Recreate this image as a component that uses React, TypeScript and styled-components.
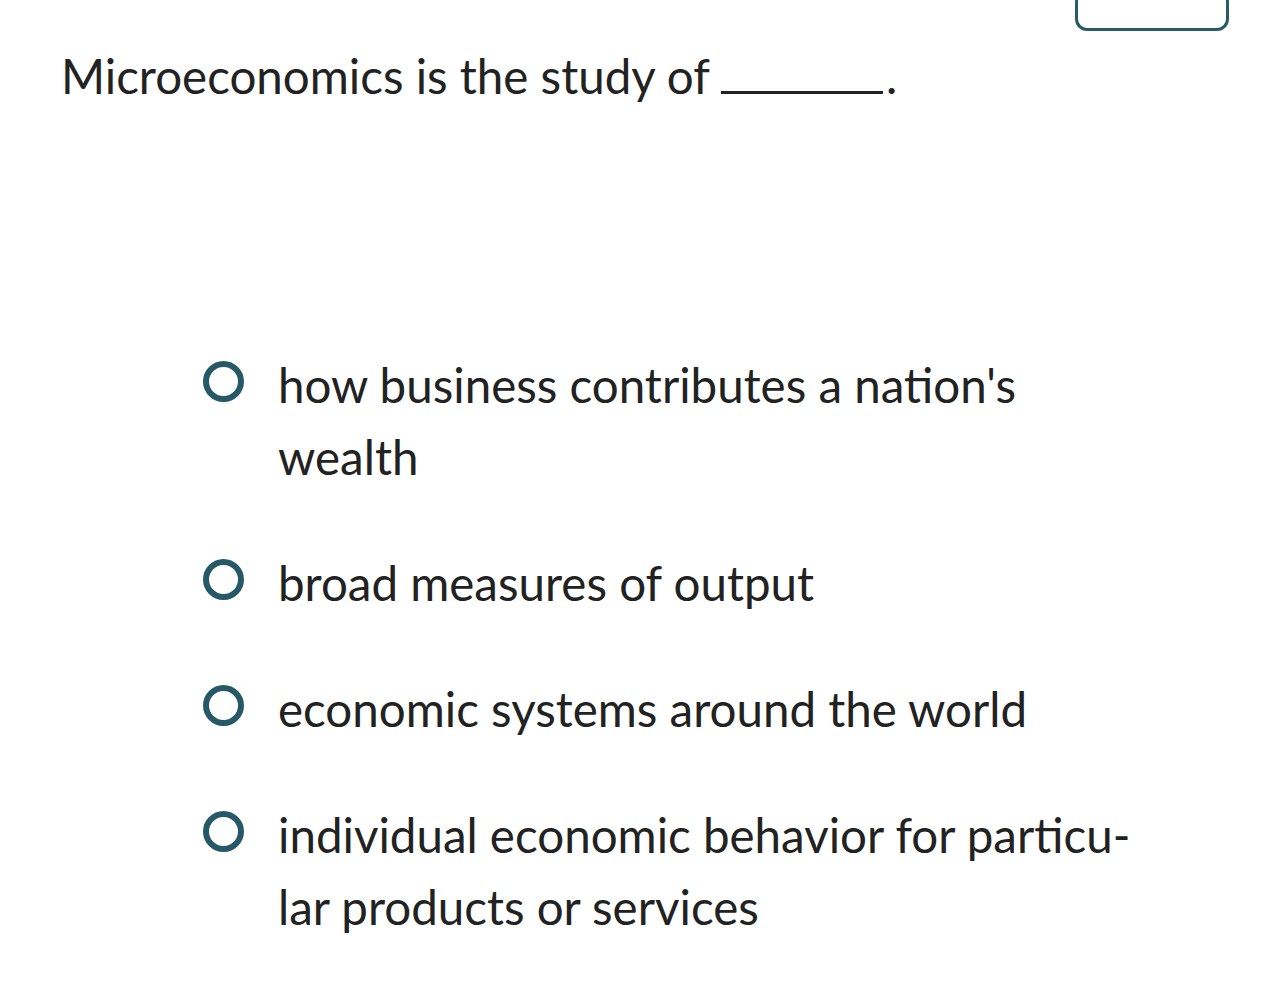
import React from "react";
import styled, { createGlobalStyle } from "styled-components";

const GlobalStyle = createGlobalStyle`
  html, body {
    margin: 0;
    padding: 0;
    background: #ffffff;
  }
  body {
    font-family: Lato, "Open Sans", "Liberation Sans", sans-serif;
    color: #222222;
  }
`;

const options = [
  "how business contributes a nation's wealth",
  "broad measures of output",
  "economic systems around the world",
  "individual economic behavior for particu\u00ADlar products or services",
];

export default function App() {
  return (
    <Page>
      <GlobalStyle />
      <TopBar>
        <CornerTab />
      </TopBar>
      <Question>
        Microeconomics is the study of <Blank />.
      </Question>
      <OptionList>
        {options.map((text) => (
          <Option key={text}>
            <Radio />
            <OptionText>{text}</OptionText>
          </Option>
        ))}
      </OptionList>
    </Page>
  );
}

const Page = styled.div`
  width: 1284px;
  height: 992px;
  overflow: hidden;
  display: flex;
  flex-direction: column;
`;

const TopBar = styled.div`
  display: flex;
  justify-content: flex-end;
  padding-right: 55px;
`;

const CornerTab = styled.div`
  width: 148px;
  height: 35px;
  margin-top: -10px;
  border: 3px solid #295b6a;
  border-radius: 12px;
`;

const Question = styled.p`
  margin: 17px 0 0 61px;
  font-size: 47.5px;
  line-height: 56px;
`;

const Blank = styled.span`
  display: inline-block;
  width: 162px;
  height: 0;
  border-bottom: 3px solid #222222;
  vertical-align: baseline;
  margin-right: 3px;
`;

const OptionList = styled.ul`
  list-style: none;
  margin: 245px 0 0 203px;
  padding: 0;
  display: flex;
  flex-direction: column;
  gap: 54px;
`;

const Option = styled.li`
  display: flex;
  align-items: flex-start;
  gap: 34px;
`;

const Radio = styled.span`
  flex: none;
  width: 41px;
  height: 41px;
  box-sizing: border-box;
  margin-top: 12px;
  border: 6px solid #265867;
  border-radius: 50%;
`;

const OptionText = styled.span`
  max-width: 870px;
  font-size: 47.5px;
  line-height: 72px;
  hyphens: manual;
`;
